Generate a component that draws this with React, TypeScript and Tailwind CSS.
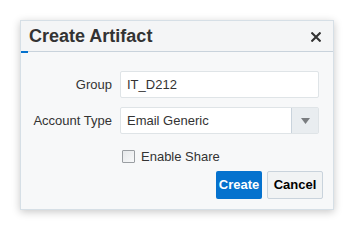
import React from 'react';

const font = { fontFamily: '"Liberation Sans", Arial, sans-serif' };

export default function App() {
  return (
    <div className="w-[354px] h-[227px] bg-white pt-[20px] pl-[20px]" style={font}>
      {/* Dialog */}
      <div className="w-[314px] h-[190px] flex flex-col border border-[#d6dfe6] bg-[#f7f8f9] shadow-[0_2px_8px_rgba(0,0,0,0.22)]">
        {/* Header */}
        <div className="relative h-[31px] shrink-0 flex items-center justify-between pl-[8px] pr-[12px] bg-[#f4f5f6] border-b border-[#c9d3dc]">
          <span className="text-[18px] font-bold text-[#333] leading-none">Create Artifact</span>
          <svg width="10" height="10" viewBox="0 0 10 10" className="mt-[1px]">
            <path d="M1.2 1.2 L8.8 8.8 M8.8 1.2 L1.2 8.8" stroke="#333" strokeWidth="2.1" strokeLinecap="square" />
          </svg>
          <div className="absolute left-0 -bottom-[2px] w-[7px] h-[2px] bg-[#0572ce]" />
        </div>

        {/* Body */}
        <div className="flex-1 flex flex-col pt-[19px] pr-[14px] pb-[9px]">
          <div className="grid grid-cols-[91px_1fr] gap-x-[8px] gap-y-[9px] items-center">
            <label className="text-right text-[13px] text-[#333]">Group</label>
            <div className="h-[27px] bg-white border border-[#dfe4e7] rounded-[2px] flex items-center px-[6px] text-[13px] text-[#333]">
              IT_D212
            </div>
            <label className="text-right text-[13px] text-[#333]">Account Type</label>
            <div className="h-[27px] bg-white border border-[#dfe4e7] rounded-[2px] flex items-center text-[13px] text-[#333]">
              <span className="flex-1 px-[6px]">Email Generic</span>
              <span className="w-[27px] h-full flex items-center justify-center bg-[#e9edf0] border-l border-[#c9d3dc]">
                <svg width="9" height="6" viewBox="0 0 9 6">
                  <path d="M0 0 H9 L4.5 6 Z" fill="#7a7d80" />
                </svg>
              </span>
            </div>
          </div>

          <div className="flex items-center gap-[6px] pl-[101px] mt-[16px]">
            <span className="w-[13px] h-[13px] border border-[#9a9ea2] bg-gradient-to-br from-[#e6e8ea] to-[#f8f9fa] rounded-[1px]" />
            <span className="text-[13px] text-[#333] leading-none">Enable Share</span>
          </div>

          <div className="flex justify-end gap-[5px] mt-[8px] mr-[-4px]">
            <button className="w-[46px] h-[28px] bg-[#0572ce] text-white text-[13px] font-bold rounded-[2px]">
              Create
            </button>
            <button className="w-[56px] h-[28px] bg-[#f1f3f4] border border-[#c9d3dc] text-[#000] text-[13px] font-bold rounded-[2px]">
              Cancel
            </button>
          </div>
        </div>
      </div>
    </div>
  );
}
